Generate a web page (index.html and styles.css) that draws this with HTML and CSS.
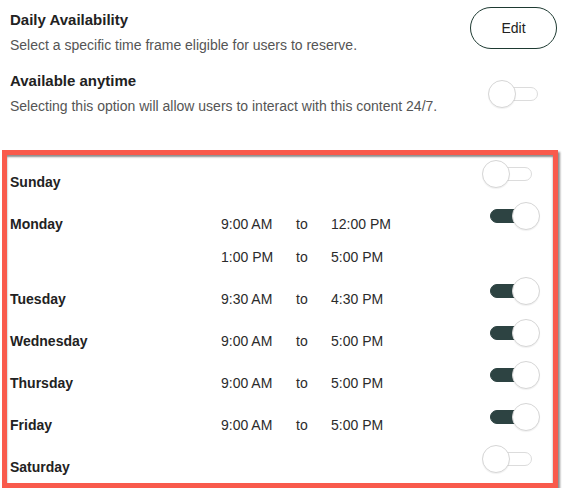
FILE: index.html
```html
<!DOCTYPE html>
<html>
<head>
<meta charset="utf-8">
<link rel="stylesheet" href="styles.css">
</head>
<body>
<div class="page">
  <div class="setting">
    <div class="setting-text">
      <h2 class="setting-title">Daily Availability</h2>
      <p class="setting-desc">Select a specific time frame eligible for users to reserve.</p>
    </div>
    <button class="btn-edit">Edit</button>
  </div>
  <div class="setting setting-anytime">
    <div class="setting-text setting-text-plain">
      <h2 class="setting-title">Available anytime</h2>
      <p class="setting-desc">Selecting this option will allow users to interact with this content 24/7.</p>
    </div>
    <span class="toggle toggle-anytime"><span class="track"></span><span class="knob"></span></span>
  </div>

  <div class="schedule">
    <div class="day">
      <div class="day-name">Sunday</div>
      <div class="day-times"></div>
      <span class="toggle"><span class="track"></span><span class="knob"></span></span>
    </div>
    <div class="day">
      <div class="day-name">Monday</div>
      <div class="day-times">
        <span>9:00 AM</span><span>to</span><span>12:00 PM</span>
        <span>1:00 PM</span><span>to</span><span>5:00 PM</span>
      </div>
      <span class="toggle on"><span class="track"></span><span class="knob"></span></span>
    </div>
    <div class="day">
      <div class="day-name">Tuesday</div>
      <div class="day-times">
        <span>9:30 AM</span><span>to</span><span>4:30 PM</span>
      </div>
      <span class="toggle on"><span class="track"></span><span class="knob"></span></span>
    </div>
    <div class="day">
      <div class="day-name">Wednesday</div>
      <div class="day-times">
        <span>9:00 AM</span><span>to</span><span>5:00 PM</span>
      </div>
      <span class="toggle on"><span class="track"></span><span class="knob"></span></span>
    </div>
    <div class="day">
      <div class="day-name">Thursday</div>
      <div class="day-times">
        <span>9:00 AM</span><span>to</span><span>5:00 PM</span>
      </div>
      <span class="toggle on"><span class="track"></span><span class="knob"></span></span>
    </div>
    <div class="day">
      <div class="day-name">Friday</div>
      <div class="day-times">
        <span>9:00 AM</span><span>to</span><span>5:00 PM</span>
      </div>
      <span class="toggle on"><span class="track"></span><span class="knob"></span></span>
    </div>
    <div class="day">
      <div class="day-name">Saturday</div>
      <div class="day-times"></div>
      <span class="toggle"><span class="track"></span><span class="knob"></span></span>
    </div>
  </div>
</div>
</body>
</html>
```

FILE: styles.css
```css
* { box-sizing: border-box; }

body {
  margin: 0;
  background: #fff;
  color: #222;
  font-family: "Liberation Sans", Arial, sans-serif;
}

.page {
  padding-top: 7px;
}

.setting {
  display: flex;
  justify-content: space-between;
  align-items: flex-start;
  padding-left: 10px;
}

.setting-text {
  padding-top: 3px;
}

.setting-title {
  margin: 0;
  font-size: 15px;
  line-height: 20px;
  font-weight: 700;
  color: #222;
}

.setting-desc {
  margin: 5px 0 0;
  font-size: 14px;
  line-height: 20px;
  color: #555;
}

.btn-edit {
  width: 87px;
  height: 42px;
  margin-right: 9px;
  border: 1px solid #1e3a32;
  border-radius: 21px;
  background: #fff;
  color: #222;
  font-family: "Liberation Sans", Arial, sans-serif;
  font-size: 14px;
  padding: 0;
}

.setting-anytime {
  margin-top: 16px;
  align-items: center;
}

.setting-text-plain {
  padding-top: 0;
}

.toggle-anytime {
  margin-right: 20px;
}

/* toggle switch */
.toggle {
  position: relative;
  display: block;
  flex: none;
  width: 58px;
  height: 28px;
}

.toggle .track {
  position: absolute;
  left: 8px;
  right: 8px;
  top: 7px;
  height: 14px;
  border-radius: 7px;
  border: 1px solid #dcdcdc;
  background: #fff;
}

.toggle .knob {
  position: absolute;
  top: 0;
  left: 0;
  width: 28px;
  height: 28px;
  border-radius: 50%;
  background: #fff;
  border: 1px solid #d6d6d6;
  box-shadow: 0 1px 1px rgba(0, 0, 0, 0.06);
}

.toggle.on .track {
  background: #2d4342;
  border-color: #2d4342;
}

.toggle.on .knob {
  left: auto;
  right: 0;
}

/* schedule box */
.schedule {
  margin: 34px 8px 0 2px;
  border: 5px solid #f95a4c;
  padding: 5px 13px 5px 3px;
  display: flex;
  flex-direction: column;
  gap: 9px;
  box-shadow: 2px 2px 2px rgba(0, 0, 0, 0.45), inset 0 2px 2px rgba(0, 0, 0, 0.45);
}

.day {
  display: flex;
  align-items: flex-start;
  min-height: 33px;
}

.day-name {
  width: 211px;
  flex: none;
  margin-top: 12px;
  font-size: 14px;
  line-height: 20px;
  font-weight: 700;
  color: #222;
}

.day-times {
  flex: 1;
  margin-top: 12px;
  padding-bottom: 1px;
  display: grid;
  grid-template-columns: 75px 35px auto;
  row-gap: 13px;
  font-size: 14px;
  line-height: 20px;
  color: #2b2b2b;
}
```
